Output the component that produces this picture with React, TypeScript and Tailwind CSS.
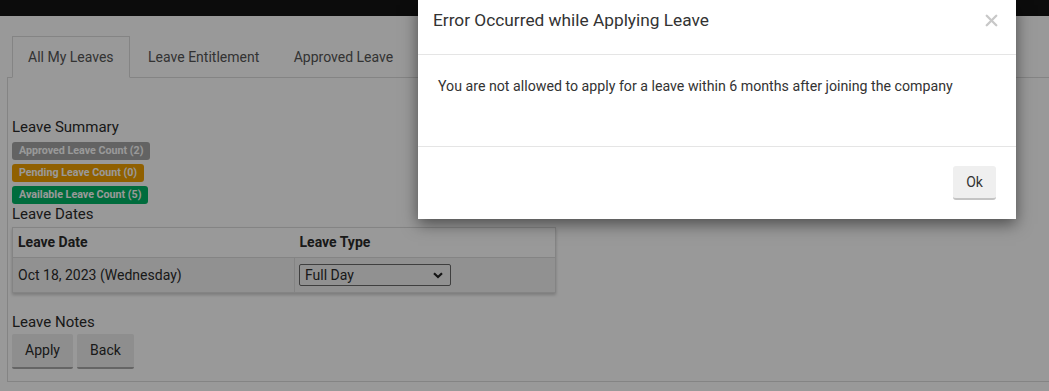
import { X } from 'lucide-react'

const tabs = ['All My Leaves', 'Leave Entitlement', 'Approved Leave']

const badges = [
    { label: 'Approved Leave Count (2)', cls: 'bg-[#a6a6a6]' },
    { label: 'Pending Leave Count (0)', cls: 'bg-[#f0a000]' },
    { label: 'Available Leave Count (5)', cls: 'bg-[#00b566]' },
]

function ErrorModal() {
    return (
        <div className="absolute left-[418px] top-0 w-[598px] bg-white shadow-[0_5px_15px_rgba(0,0,0,0.5)]">
            <div className="relative h-[55px] border-b border-[#e5e5e5] px-[15px] pt-[8px]">
                <h4 className="text-[17.3px] leading-[24px] text-[#333]">Error Occurred while Applying Leave</h4>
                <button className="absolute right-[15px] top-[11px] text-[#c8c8c8]" aria-label="Close">
                    <X className="h-[19px] w-[19px]" strokeWidth={3} />
                </button>
            </div>
            <div className="h-[91px] px-5 pt-[21px]">
                <p className="text-[14.2px] leading-5 text-[#333]">
                    You are not allowed to apply for a leave within 6 months after joining the company
                </p>
            </div>
            <div className="flex h-[73px] justify-end border-t border-[#e5e5e5] pr-5 pt-[19px]">
                <button className="h-[34px] w-[43px] rounded-[3px] border-b-2 border-[#c4c4c4] bg-[#efefef] text-[14px] text-[#333]">
                    Ok
                </button>
            </div>
        </div>
    )
}

export default function App() {
    return (
        <div className="relative h-[391px] w-full overflow-hidden bg-white font-['Roboto',sans-serif] text-[#2b2b2b]">
            <div className="h-4 bg-[#141414]" />

            <div className="pl-[7px] pt-5">
                <ul className="flex border-b border-[#ddd] pl-[5px]">
                    {tabs.map((tab, i) => (
                        <li key={tab} className="-mb-px mr-[2.5px]">
                            <span
                                className={
                                    i === 0
                                        ? 'block border border-[#ddd] border-b-white bg-white px-[15px] py-[10px] text-[14px] leading-5 text-[#555]'
                                        : 'block border border-transparent px-[15px] py-[10px] text-[14px] leading-5 text-[#555]'
                                }
                            >
                                {tab}
                            </span>
                        </li>
                    ))}
                </ul>

                <div className="h-[304px] border-b border-l border-[#ddd] pl-[4px] pt-[39px]">
                    <div className="text-[15px] leading-[21px]">Leave Summary</div>
                    <div className="mt-[4px] flex flex-col items-start gap-[4px]">
                        {badges.map((b) => (
                            <span
                                key={b.label}
                                className={`${b.cls} h-[18px] rounded-[3px] px-[7px] text-[10.7px] font-bold leading-[18px] text-white`}
                            >
                                {b.label}
                            </span>
                        ))}
                    </div>
                    <div className="text-[15px] leading-[21px]">Leave Dates</div>

                    <table className="mt-[2px] w-[544px] border border-[#ddd] text-[14px] shadow-[0_2px_3px_rgba(0,0,0,0.2)]">
                        <thead>
                            <tr className="h-[30px] bg-white">
                                <th className="w-[282px] px-[5px] text-left font-bold">Leave Date</th>
                                <th className="px-[5px] text-left font-bold">Leave Type</th>
                            </tr>
                        </thead>
                        <tbody>
                            <tr className="h-[35px] border-t border-[#ddd] bg-[#f2f2f2]">
                                <td className="px-[5px]">Oct 18, 2023 (Wednesday)</td>
                                <td className="border-l border-[#ddd] px-[4px]">
                                    <div className="relative w-[152px]">
                                        <select className="h-[22px] w-full appearance-none rounded-[2px] border border-[#6a6a6a] bg-[#f2f2f2] pl-[5px] text-[14px] text-[#2b2b2b]">
                                            <option>Full Day</option>
                                            <option>Half Day</option>
                                        </select>
                                        <svg
                                            className="pointer-events-none absolute right-[8px] top-[8px]"
                                            width="10"
                                            height="7"
                                            viewBox="0 0 10 7"
                                        >
                                            <path d="M1 1.2 L5 5 L9 1.2" fill="none" stroke="#222" strokeWidth="2.2" />
                                        </svg>
                                    </div>
                                </td>
                            </tr>
                        </tbody>
                    </table>

                    <div className="mt-[19px] text-[15px] leading-[21px]">Leave Notes</div>
                    <div className="mt-[1px] flex gap-[4px]">
                        <button className="h-[35px] w-[61px] rounded-[2px] border-b-2 border-[#a8a8a8] bg-[#ededed] text-[14px] text-[#2b2b2b]">
                            Apply
                        </button>
                        <button className="h-[35px] w-[57px] rounded-[2px] border-b-2 border-[#a8a8a8] bg-[#ededed] text-[14px] text-[#2b2b2b]">
                            Back
                        </button>
                    </div>
                </div>
            </div>

            <div className="absolute inset-0 bg-black/40" />
            <ErrorModal />
        </div>
    )
}
